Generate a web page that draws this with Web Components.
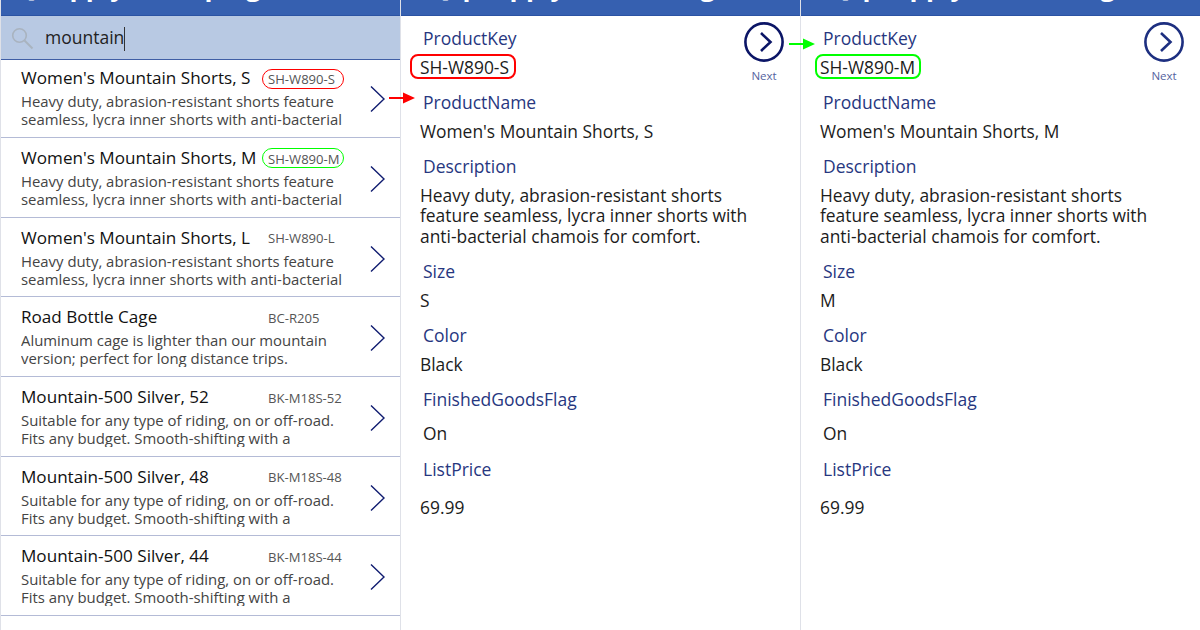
<!DOCTYPE html>
<html>
<head>
<meta charset="utf-8">
<title>Products</title>
<style>
  html, body { margin: 0; padding: 0; background: #fff; overflow: hidden; }
  body { font-family: "Open Sans", "Noto Sans", sans-serif; width: 1200px; height: 630px; }
</style>
</head>
<body>
<app-screen>
  <app-panel heading="Q Apply Grouping" indent="14" spacing="9">
    <search-box value="mountain"></search-box>
    <product-row name="Women's Mountain Shorts, S" sku="SH-W890-S" mark="red">Heavy duty, abrasion-resistant shorts feature seamless, lycra inner shorts with anti-bacterial</product-row>
    <product-row name="Women's Mountain Shorts, M" sku="SH-W890-M" mark="lime">Heavy duty, abrasion-resistant shorts feature seamless, lycra inner shorts with anti-bacterial</product-row>
    <product-row name="Women's Mountain Shorts, L" sku="SH-W890-L">Heavy duty, abrasion-resistant shorts feature seamless, lycra inner shorts with anti-bacterial</product-row>
    <product-row name="Road Bottle Cage" sku="BC-R205">Aluminum cage is lighter than our mountain version; perfect for long distance trips.</product-row>
    <product-row name="Mountain-500 Silver, 52" sku="BK-M18S-52">Suitable for any type of riding, on or off-road. Fits any budget. Smooth-shifting with a</product-row>
    <product-row name="Mountain-500 Silver, 48" sku="BK-M18S-48">Suitable for any type of riding, on or off-road. Fits any budget. Smooth-shifting with a</product-row>
    <product-row name="Mountain-500 Silver, 44" sku="BK-M18S-44">Suitable for any type of riding, on or off-road. Fits any budget. Smooth-shifting with a</product-row>
    <product-row name="Mountain Bottle Cage" sku="BC-M005">Tough aluminum cage holds bottle securely on tough terrain.</product-row>
  </app-panel>

  <app-panel heading="Q p Apply Detail Page" indent="28" spacing="6">
    <next-button color="#0b1566"></next-button>
    <detail-field label="ProductKey" mark="red">SH-W890-S</detail-field>
    <detail-field label="ProductName">Women's Mountain Shorts, S</detail-field>
    <detail-field label="Description">Heavy duty, abrasion-resistant shorts feature seamless, lycra inner shorts with anti-bacterial chamois for comfort.</detail-field>
    <detail-field label="Size">S</detail-field>
    <detail-field label="Color">Black</detail-field>
    <detail-field label="FinishedGoodsFlag" kind="toggle">On</detail-field>
    <detail-field label="ListPrice" kind="price">69.99</detail-field>
    <callout-arrow color="#ff0000" style="left:-12px;top:92px"></callout-arrow>
  </app-panel>

  <app-panel heading="Q p Apply Detail Page" indent="28" spacing="6">
    <next-button color="#1d2f80"></next-button>
    <detail-field label="ProductKey" mark="lime">SH-W890-M</detail-field>
    <detail-field label="ProductName">Women's Mountain Shorts, M</detail-field>
    <detail-field label="Description">Heavy duty, abrasion-resistant shorts feature seamless, lycra inner shorts with anti-bacterial chamois for comfort.</detail-field>
    <detail-field label="Size">M</detail-field>
    <detail-field label="Color">Black</detail-field>
    <detail-field label="FinishedGoodsFlag" kind="toggle">On</detail-field>
    <detail-field label="ListPrice" kind="price">69.99</detail-field>
    <callout-arrow color="#00ff00" style="left:-12px;top:38px"></callout-arrow>
  </app-panel>
</app-screen>

<script>
class AppScreen extends HTMLElement {
  constructor() {
    super();
    this.attachShadow({ mode: 'open' });
    this.shadowRoot.innerHTML = `
      <style>
        :host { display: grid; grid-template-columns: repeat(3, 400px); width: 1200px; height: 630px; overflow: hidden; }
      </style>
      <slot></slot>`;
  }
}

class AppPanel extends HTMLElement {
  constructor() {
    super();
    this.attachShadow({ mode: 'open' });
  }

  connectedCallback() {
    const heading = this.getAttribute('heading');
    this.shadowRoot.innerHTML = `
      <style>
        :host { display: block; position: relative; height: 630px; box-sizing: border-box; border-left: 1px solid #dfe1e8; background: #fff; }
        header { height: 15px; background: #3660b0; border-bottom: 1px solid #2b53a3; overflow: hidden; color: #fff; font-size: 26px; line-height: 30px; font-weight: 700; }
        header span { display: block; margin-top: -29px; padding-left: ${this.getAttribute('indent')}px; white-space: nowrap; word-spacing: ${this.getAttribute('spacing')}px; }
      </style>
      <header><span>${heading}</span></header>
      <slot></slot>`;
  }
}

class SearchBox extends HTMLElement {
  constructor() {
    super();
    this.attachShadow({ mode: 'open' });
  }

  connectedCallback() {
    this.shadowRoot.innerHTML = `
      <style>
        :host { display: flex; align-items: center; height: 43px; margin-bottom: -1.7px; background: #b8c9e3; border-bottom: 1px solid #3f5ea5; color: #222; }
        svg { width: 24px; height: 24px; margin-left: 9px; flex: none; }
        .text { margin-left: 11px; padding-top: 1px; font-size: 17.5px; line-height: 24px; }
        .caret { display: inline-block; width: 1px; height: 24px; background: #333; vertical-align: middle; }
      </style>
      <svg viewBox="0 0 24 24" fill="none" stroke="#a9b3bf" stroke-width="1.6">
        <circle cx="9.5" cy="9.5" r="6.8"/>
        <path d="M14.5 14.5 L22.5 22.5" stroke-width="2"/>
      </svg>
      <div class="text">${this.getAttribute('value')}<span class="caret"></span></div>`;
  }
}

class ProductRow extends HTMLElement {
  constructor() {
    super();
    this.attachShadow({ mode: 'open' });
  }

  connectedCallback() {
    const mark = this.getAttribute('mark');
    this.shadowRoot.innerHTML = `
      <style>
        :host { display: block; position: relative; box-sizing: border-box; height: 79.7px; padding: 8px 0 0 20px; border-bottom: 1px solid #b4bbd6; }
        .name { font-size: 17.1px; line-height: 24px; color: #111; white-space: nowrap; }
        .sku { position: absolute; left: 267px; top: 11.7px; font-size: 13.1px; line-height: 18px; color: #555; white-space: nowrap; }
        .mark { position: absolute; left: 261px; width: 80px; top: 10.4px; height: 18px; border: 1.5px solid ${mark}; border-radius: 10px; }
        .desc { width: 330px; margin-top: 2px; font-size: 14.9px; line-height: 18px; color: #444; height: 36px; overflow: hidden; }
        svg { position: absolute; left: 368px; top: 27px; width: 18px; height: 28px; }
      </style>
      <div class="name">${this.getAttribute('name')}</div>
      <div class="sku">${this.getAttribute('sku')}</div>
      ${mark ? '<div class="mark"></div>' : ''}
      <div class="desc"><slot></slot></div>
      <svg viewBox="0 0 18 28" fill="none" stroke="#101c70" stroke-width="1.4"><path d="M2 1.5 L15 14 L2 26.5"/></svg>`;
  }
}

class DetailField extends HTMLElement {
  constructor() {
    super();
    this.attachShadow({ mode: 'open' });
  }

  connectedCallback() {
    const kind = this.getAttribute('kind');
    const mark = this.getAttribute('mark');
    const gap = kind === 'toggle' ? 11.75 : kind === 'price' ? 15.75 : 6.5;
    const after = kind === 'toggle' ? 13.75 : 13;
    this.shadowRoot.innerHTML = `
      <style>
        :host { display: block; position: relative; width: 340px; padding: 0 0 ${after}px 19px; }
        .label { padding-left: 3px; font-size: 17.5px; line-height: 24px; color: #27377f; white-space: nowrap; }
        .value { margin-top: ${gap}px; padding-left: ${kind === 'toggle' ? 3 : 0}px; font-size: 17.4px; line-height: 20.5px; color: #1c1c1c; }
        .mark { position: absolute; left: ${mark === 'red' ? 9 : 14}px; width: 102px; top: 28px; height: 21px; border: 2px solid ${mark === 'red' ? '#ff0000' : '#00ff00'}; border-radius: 8px; }
      </style>
      <div class="label">${this.getAttribute('label')}</div>
      <div class="value"><slot></slot></div>
      ${mark ? '<div class="mark"></div>' : ''}`;
    if (!this.previousElementSibling || this.previousElementSibling.tagName !== 'DETAIL-FIELD') {
      this.style.marginTop = '10px';
    }
  }
}

class NextButton extends HTMLElement {
  constructor() {
    super();
    this.attachShadow({ mode: 'open' });
  }

  connectedCallback() {
    const color = this.getAttribute('color');
    this.shadowRoot.innerHTML = `
      <style>
        :host { display: flex; flex-direction: column; align-items: center; position: absolute; left: 339px; top: 22px; width: 48px; }
        svg { width: 40px; height: 40px; display: block; }
        span { margin-top: 6px; font-size: 11.5px; line-height: 16px; color: #5663a0; }
      </style>
      <svg viewBox="0 0 40 40" fill="none" stroke="${color}">
        <circle cx="20" cy="20" r="18.6" stroke-width="2.6"/>
        <path d="M17 11 L26.5 20 L17 29" stroke-width="2.6"/>
      </svg>
      <span>Next</span>`;
  }
}

class CalloutArrow extends HTMLElement {
  constructor() {
    super();
    this.attachShadow({ mode: 'open' });
  }

  connectedCallback() {
    this.shadowRoot.innerHTML = `
      <style>
        :host { display: block; position: absolute; width: 26px; height: 12px; }
        svg { display: block; }
      </style>
      <svg width="26" height="12" viewBox="0 0 26 12">
        <path d="M0 5 H14 V0.5 L26 6 L14 11.5 V7 H0 Z" fill="${this.getAttribute('color')}"/>
      </svg>`;
  }
}

customElements.define('app-screen', AppScreen);
customElements.define('app-panel', AppPanel);
customElements.define('search-box', SearchBox);
customElements.define('product-row', ProductRow);
customElements.define('detail-field', DetailField);
customElements.define('next-button', NextButton);
customElements.define('callout-arrow', CalloutArrow);
</script>
</body>
</html>
